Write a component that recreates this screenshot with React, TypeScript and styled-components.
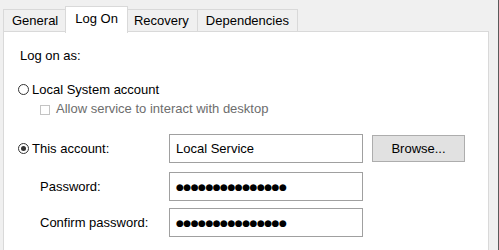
import React from 'react';
import styled, { createGlobalStyle } from 'styled-components';

const GlobalStyle = createGlobalStyle`
  html, body {
    margin: 0;
    padding: 0;
    background: #f0f0f0;
  }
  body {
    font-family: 'Liberation Sans', Arial, sans-serif;
    font-size: 13px;
    color: #000;
  }
`;

const Window = styled.div`
  width: 498px;
  height: 250px;
  border-right: 1px solid #5a5a5a;
  background: #f0f0f0;
  display: flex;
  flex-direction: column;
  overflow: hidden;
`;

const TabStrip = styled.div`
  display: flex;
  align-items: flex-end;
  height: 32px;
  padding-left: 3px;
  position: relative;
  z-index: 1;
`;

const Tab = styled.div<{ $active?: boolean }>`
  box-sizing: border-box;
  height: ${p => (p.$active ? '27px' : '23px')};
  margin-bottom: ${p => (p.$active ? '-1px' : '0')};
  padding: 0 ${p => (p.$active ? '9px' : '8px')};
  margin-left: ${p => (p.$active ? '-2px' : '-1px')};
  margin-right: ${p => (p.$active ? '-2px' : '0')};
  background: ${p => (p.$active ? '#fff' : '#f0f0f0')};
  border: 1px solid #d9d9d9;
  border-bottom: ${p => (p.$active ? 'none' : '1px solid #d9d9d9')};
  display: flex;
  align-items: center;
  padding-bottom: ${p => (p.$active ? '3px' : '0')};
  position: relative;
  z-index: ${p => (p.$active ? 2 : 1)};
  white-space: nowrap;
  &:first-child {
    margin-left: 0;
  }
`;

const Panel = styled.div`
  flex: 1;
  margin: -1px 9px 0 3px;
  background: #fff;
  border: 1px solid #d9d9d9;
  border-bottom: none;
  padding: 16px 0 0 14px;
`;

const Heading = styled.div`
  line-height: 15px;
  height: 15px;
  padding-left: 2px;
`;

const OptionRow = styled.div<{ $mt: number; $indent?: number }>`
  display: flex;
  align-items: center;
  height: 15px;
  margin-top: ${p => p.$mt}px;
  padding-left: ${p => p.$indent ?? 0}px;
`;

const Radio = styled.span<{ $checked?: boolean }>`
  box-sizing: border-box;
  width: 11px;
  height: 11px;
  border-radius: 50%;
  border: 1px solid #333;
  margin-right: 3px;
  display: inline-flex;
  align-items: center;
  justify-content: center;
  flex: none;
  &::after {
    content: '';
    width: 5px;
    height: 5px;
    border-radius: 50%;
    background: #333;
    display: ${p => (p.$checked ? 'block' : 'none')};
  }
`;

const Check = styled.span`
  box-sizing: border-box;
  width: 10px;
  height: 10px;
  border: 1px solid #c4c4c4;
  margin-right: 6px;
  margin-top: 3px;
  flex: none;
`;

const DimText = styled.span`
  color: #6d6d6d;
`;

const Form = styled.div`
  display: grid;
  grid-template-columns: 142px 194px 93px;
  column-gap: 9px;
  margin-top: 18px;
`;

const FieldLabel = styled.div<{ $indent?: number }>`
  display: flex;
  align-items: center;
  height: 29px;
  padding-left: ${p => p.$indent ?? 0}px;
  white-space: nowrap;
`;

const TextBox = styled.div`
  box-sizing: border-box;
  height: 29px;
  border: 1px solid #a0a0a0;
  background: #fff;
  padding: 0 6px;
  display: flex;
  align-items: center;
`;

const Dots = styled.span`
  font-family: 'DejaVu Sans', sans-serif;
  font-size: 9px;
  letter-spacing: -0.5px;
  padding-top: 1px;
`;

const Button = styled.div`
  box-sizing: border-box;
  height: 27px;
  margin-top: 1px;
  border: 1px solid #adadad;
  background: #e1e1e1;
  display: flex;
  align-items: center;
  justify-content: center;
`;

const Spacer = styled.div<{ $h: number }>`
  grid-column: 1 / -1;
  height: ${p => p.$h}px;
`;

const dots = '●●●●●●●●●●●●●●●';

export default function App() {
  return (
    <>
      <GlobalStyle />
      <Window>
        <TabStrip>
          <Tab>General</Tab>
          <Tab $active>Log On</Tab>
          <Tab>Recovery</Tab>
          <Tab>Dependencies</Tab>
        </TabStrip>
        <Panel>
          <Heading>Log on as:</Heading>
          <OptionRow $mt={19}>
            <Radio />
            Local System account
          </OptionRow>
          <OptionRow $mt={4} $indent={22}>
            <Check />
            <DimText>Allow service to interact with desktop</DimText>
          </OptionRow>
          <Form>
            <FieldLabel>
              <Radio $checked />
              This account:
            </FieldLabel>
            <TextBox>Local Service</TextBox>
            <Button>Browse...</Button>
            <Spacer $h={9} />
            <FieldLabel $indent={22}>Password:</FieldLabel>
            <TextBox>
              <Dots>{dots}</Dots>
            </TextBox>
            <div />
            <Spacer $h={7} />
            <FieldLabel $indent={22}>Confirm password:</FieldLabel>
            <TextBox>
              <Dots>{dots}</Dots>
            </TextBox>
            <div />
          </Form>
        </Panel>
      </Window>
    </>
  );
}
